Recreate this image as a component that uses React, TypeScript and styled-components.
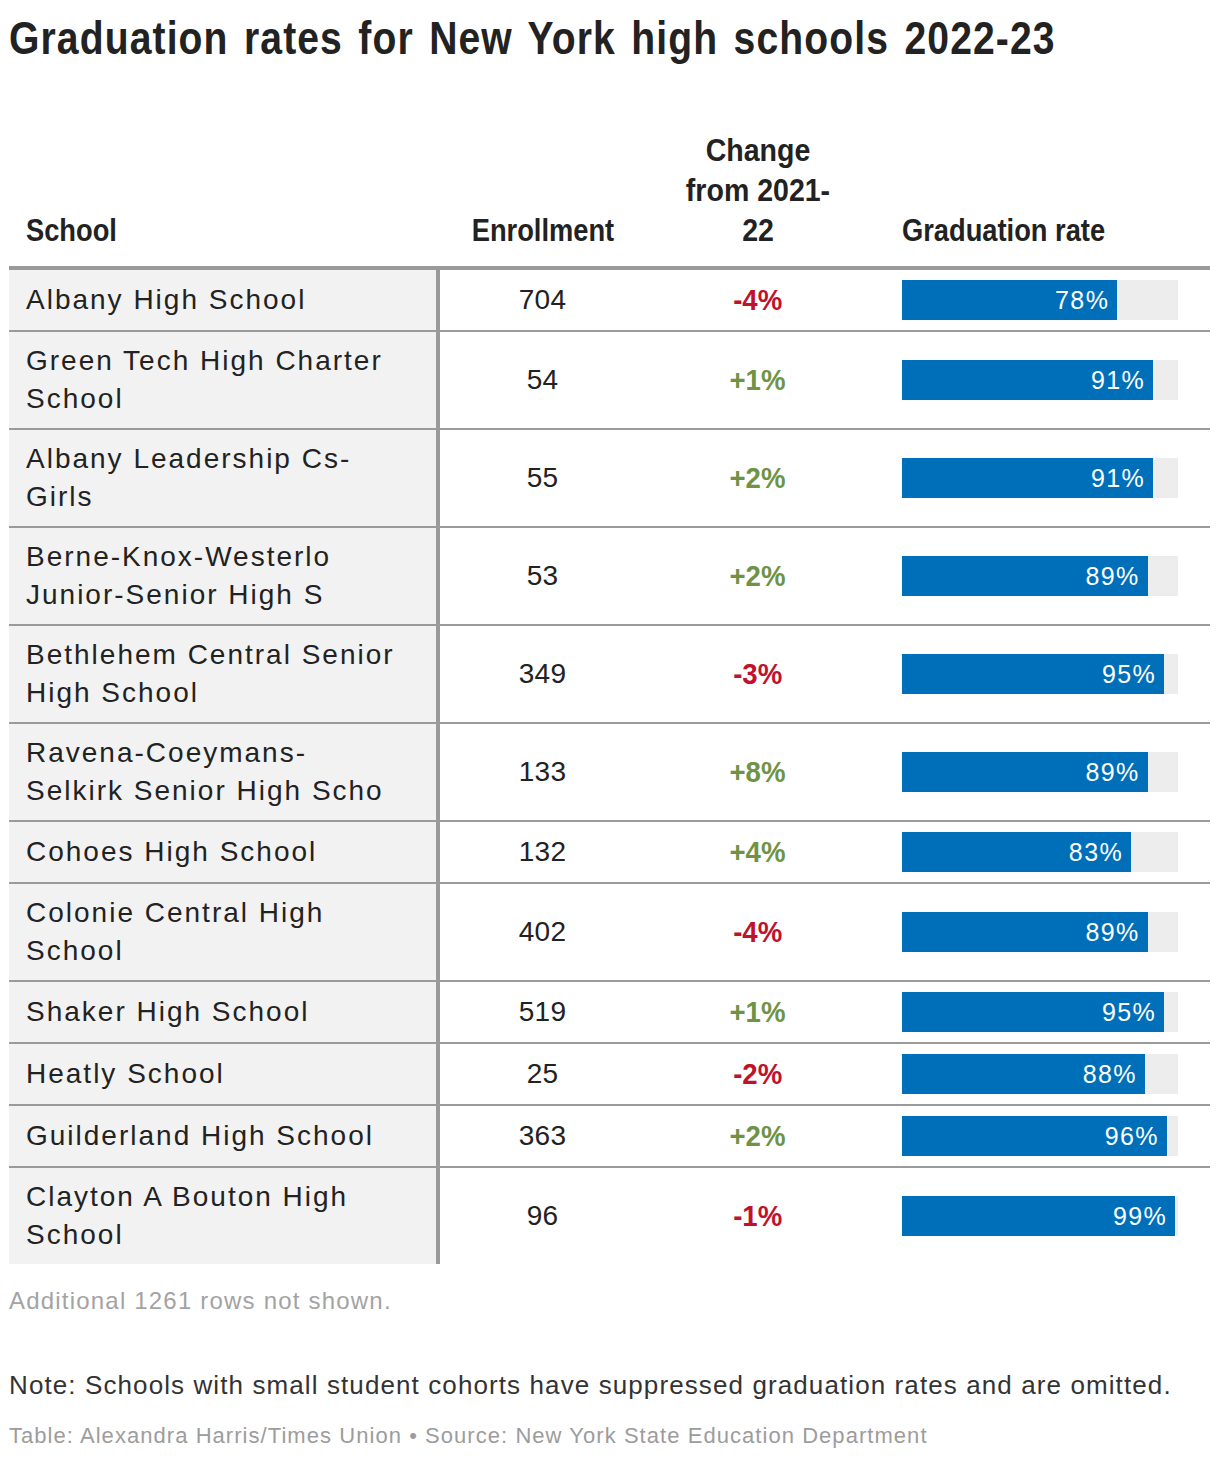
import React from "react";
import styled, { createGlobalStyle } from "styled-components";

interface School {
  name: string;
  enrollment: number;
  change: number;
  rate: number;
}

const rows: School[] = [
  { name: "Albany High School", enrollment: 704, change: -4, rate: 78 },
  { name: "Green Tech High Charter School", enrollment: 54, change: 1, rate: 91 },
  { name: "Albany Leadership Cs-Girls", enrollment: 55, change: 2, rate: 91 },
  { name: "Berne-Knox-Westerlo Junior-Senior High S", enrollment: 53, change: 2, rate: 89 },
  { name: "Bethlehem Central Senior High School", enrollment: 349, change: -3, rate: 95 },
  { name: "Ravena-Coeymans-Selkirk Senior High Scho", enrollment: 133, change: 8, rate: 89 },
  { name: "Cohoes High School", enrollment: 132, change: 4, rate: 83 },
  { name: "Colonie Central High School", enrollment: 402, change: -4, rate: 89 },
  { name: "Shaker High School", enrollment: 519, change: 1, rate: 95 },
  { name: "Heatly School", enrollment: 25, change: -2, rate: 88 },
  { name: "Guilderland High School", enrollment: 363, change: 2, rate: 96 },
  { name: "Clayton A Bouton High School", enrollment: 96, change: -1, rate: 99 },
];

const sans = `"Liberation Sans", Arial, Helvetica, sans-serif`;

const GlobalStyle = createGlobalStyle`
  html, body {
    margin: 0;
    padding: 0;
    background: #ffffff;
  }
  body {
    font-family: ${sans};
    color: #333333;
  }
`;

export default function App() {
  return (
    <>
      <GlobalStyle />
      <Page>
        <Title>
          <TitleText>Graduation rates for New York high schools 2022-23</TitleText>
        </Title>
        <Table>
          <thead>
            <tr>
              <HeadCell $align="left" $width={431}>
                <HeadText $origin="left">School</HeadText>
              </HeadCell>
              <HeadCell $align="center" $width={205}>
                <HeadText $origin="center">Enrollment</HeadText>
              </HeadCell>
              <HeadCell $align="center" $width={225}>
                <ChangeHead>Change from 2021-22</ChangeHead>
              </HeadCell>
              <HeadCell $align="left" $inset>
                <HeadText $origin="left">Graduation rate</HeadText>
              </HeadCell>
            </tr>
          </thead>
          <tbody>
            {rows.map((r, i) => {
              const last = i === rows.length - 1;
              return (
                <tr key={r.name}>
                  <SchoolCell $last={last}>{r.name}</SchoolCell>
                  <NumCell $last={last}>{r.enrollment}</NumCell>
                  <ChangeCell $last={last} $up={r.change > 0}>
                    <ChangeValue>
                      {r.change > 0 ? "+" : ""}
                      {r.change}%
                    </ChangeValue>
                  </ChangeCell>
                  <RateCell $last={last}>
                    <BarTrack>
                      <BarFill style={{ width: `${r.rate}%` }}>
                        <BarLabel>{r.rate}%</BarLabel>
                      </BarFill>
                    </BarTrack>
                  </RateCell>
                </tr>
              );
            })}
          </tbody>
        </Table>
        <MoreRows>Additional 1261 rows not shown.</MoreRows>
        <Note>
          Note: Schools with small student cohorts have suppressed graduation rates and are omitted.
        </Note>
        <Source>
          Table: Alexandra Harris/Times Union • Source: New York State Education Department
        </Source>
      </Page>
    </>
  );
}

const Page = styled.div`
  width: 1201px;
  padding: 0 10px 0 9px;
`;

const Title = styled.h1`
  margin: 0;
  padding-top: 12px;
  font-family: ${sans};
  font-weight: 700;
  font-size: 46px;
  line-height: 52px;
  color: #222222;
  white-space: nowrap;
`;

/* no condensed face is installed, so the bold face is narrowed */
const TitleText = styled.span`
  display: inline-block;
  transform: scaleX(0.85);
  transform-origin: left center;
  letter-spacing: 1.3px;
  word-spacing: 4px;
`;

const Table = styled.table`
  width: 1201px;
  margin-top: 67px;
  border-collapse: separate;
  border-spacing: 0;
  table-layout: fixed;
`;

const HeadCell = styled.th<{ $align: "left" | "center"; $width?: number; $inset?: boolean }>`
  box-sizing: border-box;
  ${(p) => (p.$width ? `width: ${p.$width}px;` : "")}
  text-align: ${(p) => p.$align};
  vertical-align: bottom;
  font-family: ${sans};
  font-weight: 700;
  font-size: 31px;
  line-height: 40px;
  color: #222222;
  padding: 0 0 15px ${(p) => (p.$inset ? "32px" : p.$align === "left" ? "17px" : "0")};
  border-bottom: 4px solid #9a9a9a;
`;

const HeadText = styled.span<{ $origin: "left" | "center" }>`
  display: inline-block;
  white-space: nowrap;
  transform: scaleX(0.88);
  transform-origin: ${(p) => p.$origin} center;
`;

const ChangeHead = styled.span`
  display: inline-block;
  width: 170px;
  text-align: center;
  transform: scaleX(0.92);
  transform-origin: center center;
`;

const Cell = styled.td<{ $last: boolean }>`
  box-sizing: border-box;
  vertical-align: middle;
  border-bottom: ${(p) => (p.$last ? "none" : "2px solid #9a9a9a")};
  padding: 10px 0;
`;

const SchoolCell = styled(Cell)`
  background: #f2f2f2;
  border-right: 4px solid #9a9a9a;
  padding: 10px 38px 10px 17px;
  font-size: 28px;
  line-height: 38px;
  letter-spacing: 2px;
  color: #222222;
`;

const NumCell = styled(Cell)`
  text-align: center;
  font-size: 28px;
  line-height: 38px;
  letter-spacing: 0.3px;
  color: #222222;
`;

const ChangeCell = styled(Cell)<{ $up: boolean }>`
  text-align: center;
  font-weight: 700;
  font-size: 30px;
  line-height: 38px;
  color: ${(p) => (p.$up ? "#6f9344" : "#c0112d")};
`;

const ChangeValue = styled.span`
  display: inline-block;
  transform: scaleX(0.92);
  transform-origin: center center;
`;

const RateCell = styled(Cell)`
  padding: 10px 32px;
`;

const BarTrack = styled.div`
  height: 40px;
  background: #ededed;
  display: flex;
`;

const BarFill = styled.div`
  height: 100%;
  background: #006fba;
  display: flex;
  align-items: center;
  justify-content: flex-end;
`;

const BarLabel = styled.span`
  color: #ffffff;
  font-size: 25px;
  letter-spacing: 1.4px;
  padding-right: 8px;
`;

const MoreRows = styled.div`
  margin-top: 21px;
  font-size: 24px;
  line-height: 32px;
  letter-spacing: 1.2px;
  color: #a3a3a3;
`;

const Note = styled.div`
  margin-top: 51px;
  font-size: 26px;
  line-height: 34px;
  letter-spacing: 1.1px;
  color: #333333;
`;

const Source = styled.div`
  margin-top: 19px;
  font-size: 22px;
  line-height: 30px;
  letter-spacing: 1.05px;
  color: #9c9c9c;
`;
